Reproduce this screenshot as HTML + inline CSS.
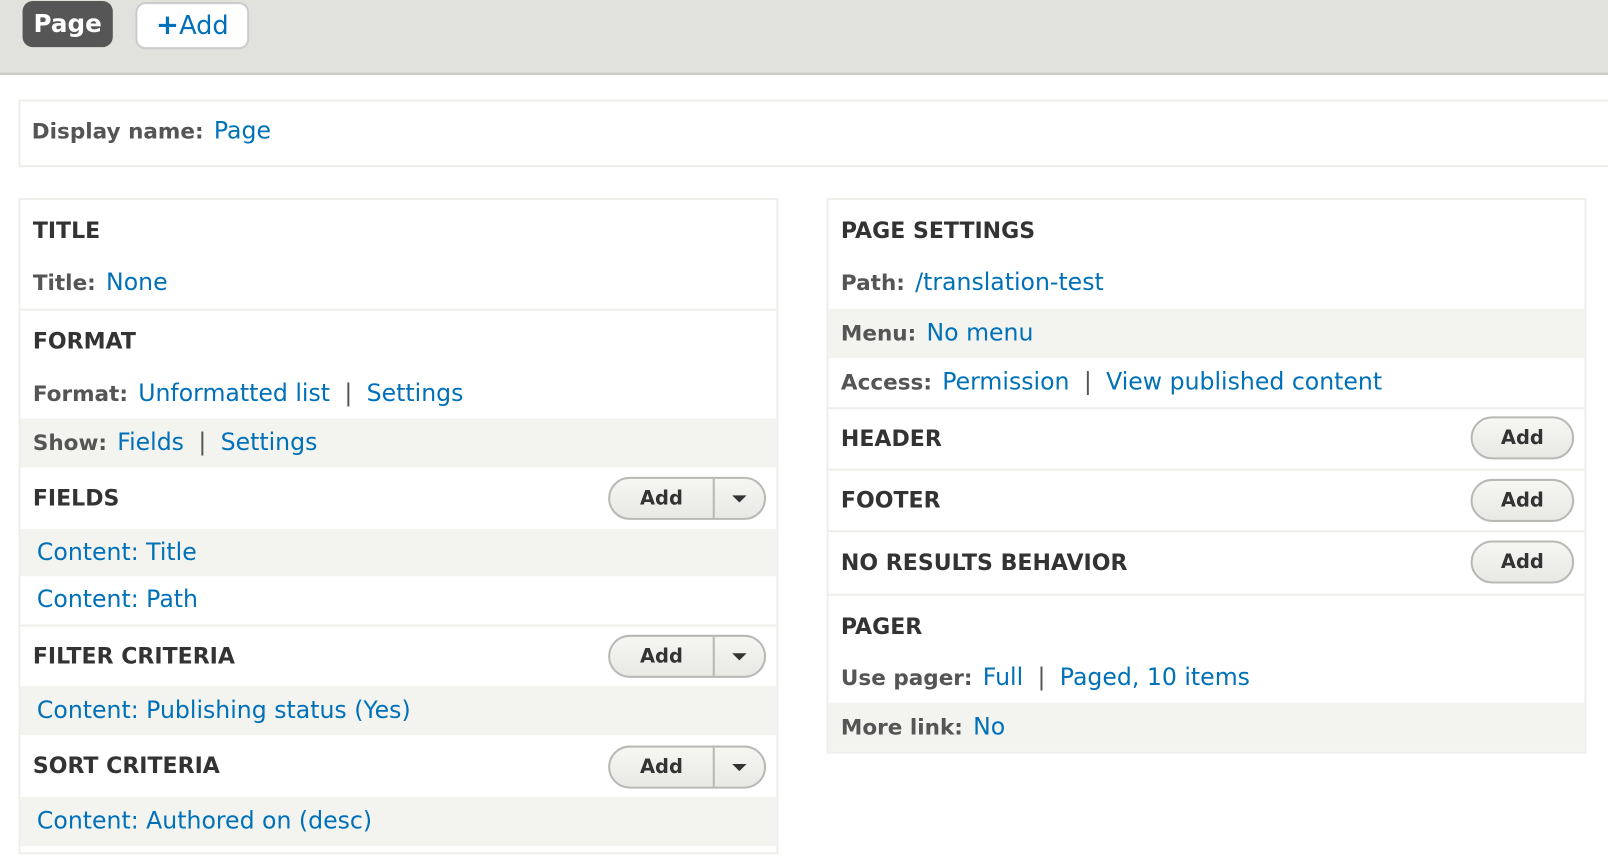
<!DOCTYPE html>
<html><head><style>
*{margin:0;padding:0;box-sizing:border-box}
body{width:1608px;height:856px;background:#fff;overflow:hidden}
#c{position:absolute;left:0;top:0;width:1568px;height:835px;transform:scale(1.02551);transform-origin:0 0;font-family:"DejaVu Sans","Liberation Sans",sans-serif;font-size:23px;color:#555}
.a{position:absolute}
.top{left:0;top:0;width:1568px;height:73px;background:#e2e2dd;border-bottom:2px solid #c8c8c4}
.pg{left:22px;top:1px;width:88px;height:45px;background:#565656;border-radius:10px;color:#fff;font-weight:bold;font-size:24px;line-height:44px;text-align:center}
.add{left:132px;top:2px;width:111px;height:46px;background:#fff;border:2px solid #ccc;border-radius:10px;color:#0071b8;font-size:25px;line-height:42px;text-align:center}
.box{border:2px solid #eeeeea;background:#fff}
.row{position:absolute;left:0;right:0;padding-left:12px;display:flex;align-items:center}
.g{background:#f3f3ef}
.h{font-weight:bold;color:#333;font-size:21.5px}
.l{color:#0071b8}
.b{color:#555;font-weight:bold;margin-right:10px;font-size:21px}
.sep{margin:0 14px;color:#555}
.line{position:absolute;left:0;right:0;height:2px;background:#eeeeea}
.btn{position:absolute;height:42px;border:2px solid #b8b8b4;border-radius:22px;background:linear-gradient(#f6f6f3,#e8e8e4);font-size:19px;font-weight:bold;color:#333;display:flex;align-items:center}
.btn .t{flex:1;text-align:center}
.btn .d{width:50px;height:100%;border-left:2px solid #b8b8b4;display:flex;align-items:center;justify-content:center}
.tri{width:0;height:0;border-left:7px solid transparent;border-right:7px solid transparent;border-top:7px solid #333}
</style></head><body><div id="c">
<div class="a top"></div>
<div class="a pg">Page</div>
<div class="a add"><b style="font-size:27px">+</b>Add</div>

<div class="a box" style="left:18px;top:97px;width:1600px;height:66px"></div>
<div class="a" style="left:31px;top:115px"><span class="b">Display name:</span><span class="l">Page</span></div>

<div class="a box" style="left:18px;top:193px;width:741px;height:640px">
 <div class="row h" style="top:13px;height:34px">TITLE</div>
 <div class="row" style="top:64px;height:34px"><span class="b">Title:</span><span class="l">None</span></div>
 <div class="line" style="top:106px"></div>
 <div class="row h" style="top:121px;height:34px">FORMAT</div>
 <div class="row" style="top:172px;height:34px"><span class="b">Format:</span><span class="l">Unformatted list</span><span class="sep">|</span><span class="l">Settings</span></div>
 <div class="row g" style="top:213px;height:48px"><span class="b">Show:</span><span class="l">Fields</span><span class="sep">|</span><span class="l">Settings</span></div>
 <div class="row h" style="top:261px;height:60px">FIELDS</div>
 <div class="row g" style="top:321px;height:46px;padding-left:16px"><span class="l">Content: Title</span></div>
 <div class="row" style="top:367px;height:46px;padding-left:16px"><span class="l">Content: Path</span></div>
 <div class="line" style="top:414px"></div>
 <div class="row h" style="top:416px;height:58px">FILTER CRITERIA</div>
 <div class="row g" style="top:474px;height:48px;padding-left:16px"><span class="l">Content: Publishing status (Yes)</span></div>
 <div class="row h" style="top:523px;height:58px">SORT CRITERIA</div>
 <div class="row g" style="top:582px;height:48px;padding-left:16px"><span class="l">Content: Authored on (desc)</span></div>
</div>
<div class="btn" style="left:593px;top:465px;width:154px"><span class="t">Add</span><span class="d"><span class="tri"></span></span></div>
<div class="btn" style="left:593px;top:619px;width:154px"><span class="t">Add</span><span class="d"><span class="tri"></span></span></div>
<div class="btn" style="left:593px;top:727px;width:154px"><span class="t">Add</span><span class="d"><span class="tri"></span></span></div>

<div class="a box" style="left:806px;top:193px;width:741px;height:542px">
 <div class="row h" style="top:13px;height:34px">PAGE SETTINGS</div>
 <div class="row" style="top:64px;height:34px"><span class="b">Path:</span><span class="l">/translation-test</span></div>
 <div class="row g" style="top:106px;height:48px"><span class="b">Menu:</span><span class="l">No menu</span></div>
 <div class="row" style="top:161px;height:34px"><span class="b">Access:</span><span class="l">Permission</span><span class="sep">|</span><span class="l">View published content</span></div>
 <div class="line" style="top:202px"></div>
 <div class="row h" style="top:204px;height:58px">HEADER</div>
 <div class="line" style="top:262px"></div>
 <div class="row h" style="top:264px;height:58px">FOOTER</div>
 <div class="line" style="top:322px"></div>
 <div class="row h" style="top:324px;height:60px">NO RESULTS BEHAVIOR</div>
 <div class="line" style="top:384px"></div>
 <div class="row h" style="top:399px;height:34px">PAGER</div>
 <div class="row" style="top:449px;height:34px"><span class="b">Use pager:</span><span class="l">Full</span><span class="sep">|</span><span class="l">Paged, 10 items</span></div>
 <div class="row g" style="top:490px;height:48px"><span class="b">More link:</span><span class="l">No</span></div>
</div>
<div class="btn" style="left:1434px;top:406px;width:101px"><span class="t">Add</span></div>
<div class="btn" style="left:1434px;top:467px;width:101px"><span class="t">Add</span></div>
<div class="btn" style="left:1434px;top:527px;width:101px"><span class="t">Add</span></div>
</div></body></html>
